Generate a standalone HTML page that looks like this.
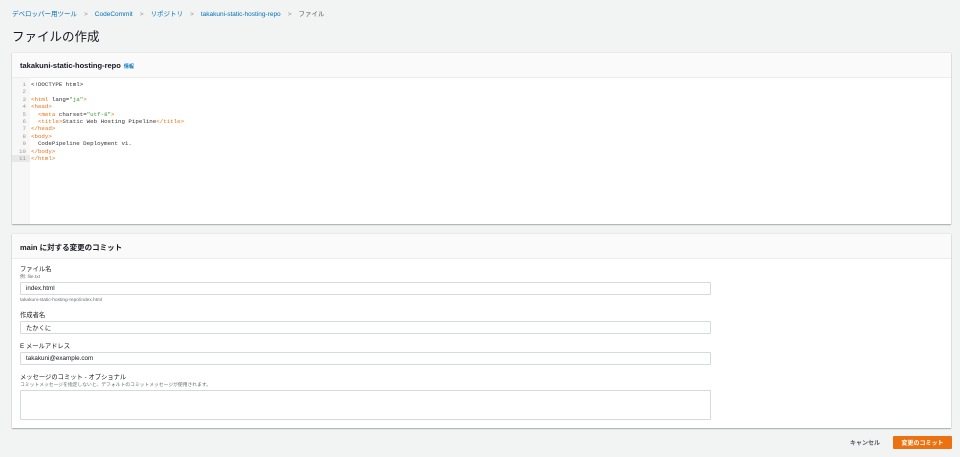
<!DOCTYPE html>
<html><head><meta charset="utf-8"><style>
*{box-sizing:border-box;margin:0;padding:0}
body{width:960px;height:457px;background:#f2f3f3;font-family:"Liberation Sans","Noto Sans CJK JP",sans-serif;color:#16191f;position:relative;overflow:hidden}
.bc{position:absolute;left:12px;top:8px;font-size:6.5px;color:#0073bb;white-space:nowrap}
.bc span.s{color:#879596;margin:0 7px}
.bc span.g{color:#545b64}
h1{position:absolute;left:12px;top:26px;font-size:12.5px;font-weight:normal;color:#16191f}
.p{position:absolute;left:12px;width:939px;background:#fff;box-shadow:0 1px 1px rgba(0,28,36,.3),0 0 1px rgba(0,28,36,.2)}
.ph{background:#fafafa;height:25px;padding:8px 8px;font-size:7.5px;font-weight:bold;border-bottom:1px solid #eaeded}
.ph small{color:#0073bb;font-size:5px;margin-left:3px}
.ed{position:absolute;top:25px;left:0;right:0;bottom:0;font-family:"Liberation Mono","DejaVu Sans Mono",monospace;font-size:5.8px;line-height:7.4px}
.gut{position:absolute;left:0;top:0;bottom:0;width:18px;background:#f7f7f7;}
.gl div{text-align:right;padding-right:4px;color:#999}
.code{position:absolute;left:19px;top:3px;right:0;white-space:pre;color:#333}
.gl{position:absolute;left:0;top:3px;width:18px}
.t{color:#e8731a}.v{color:#3b9a3b}
.hl{background:#e8e8e8}
label{display:block;font-size:6.3px;color:#16191f;}
.f{position:absolute;left:8px;width:691px}
.hint{font-size:4.8px;color:#687078;white-space:nowrap}
.in{height:13px;border:1px solid #d5dbdb;border-radius:1px;font-size:6.3px;padding:0 5px;margin-top:2px;display:flex;align-items:center}
</style></head><body>
<div class="bc">デベロッパー用ツール<span class="s">&gt;</span>CodeCommit<span class="s">&gt;</span>リポジトリ<span class="s">&gt;</span>takakuni-static-hosting-repo<span class="s">&gt;</span><span class="g">ファイル</span></div>
<h1>ファイルの作成</h1>
<div class="p" style="top:53px;height:171px">
<div class="ph">takakuni-static-hosting-repo<small>情報</small></div>
<div class="ed">
<div class="gut"></div>
<div class="hl" style="position:absolute;left:0;top:77px;width:18px;height:7.4px"></div>
<div class="gl"><div>1</div><div>2</div><div>3</div><div>4</div><div>5</div><div>6</div><div>7</div><div>8</div><div>9</div><div>10</div><div>11</div></div>
<div class="code">&lt;!DOCTYPE html&gt;

<span class="t">&lt;html</span> lang=<span class="v">"ja"</span><span class="t">&gt;</span>
<span class="t">&lt;head&gt;</span>
  <span class="t">&lt;meta</span> charset=<span class="v">"utf-8"</span><span class="t">&gt;</span>
  <span class="t">&lt;title&gt;</span>Static Web Hosting Pipeline<span class="t">&lt;/title&gt;</span>
<span class="t">&lt;/head&gt;</span>
<span class="t">&lt;body&gt;</span>
  CodePipeline Deployment v1.
<span class="t">&lt;/body&gt;</span>
<span class="t">&lt;/html&gt;</span></div>
</div>
</div>
<div class="p" style="top:234px;height:194px">
<div class="ph" style="padding-top:8px">main に対する変更のコミット</div>
<div class="f" style="top:30px"><label>ファイル名</label><div class="hint">例: file.txt</div><div class="in">index.html</div><div class="hint" style="margin-top:3px">takakuni-static-hosting-repo/index.html</div></div>
<div class="f" style="top:76px"><label>作成者名</label><div class="in">たかくに</div></div>
<div class="f" style="top:107px"><label>E メールアドレス</label><div class="in">takakuni@example.com</div></div>
<div class="f" style="top:138px"><label>メッセージのコミット - オプショナル</label><div class="hint">コミットメッセージを指定しないと、デフォルトのコミットメッセージが使用されます。</div><div class="in" style="height:30px"></div></div>
</div>
<div style="position:absolute;left:850px;top:438px;font-size:6px;font-weight:bold;color:#545b64">キャンセル</div>
<div style="position:absolute;left:893px;top:436px;width:59px;height:13px;background:#ec7211;color:#fff;font-size:6px;font-weight:bold;display:flex;align-items:center;justify-content:center;border-radius:1px">変更のコミット</div>
</body></html>
